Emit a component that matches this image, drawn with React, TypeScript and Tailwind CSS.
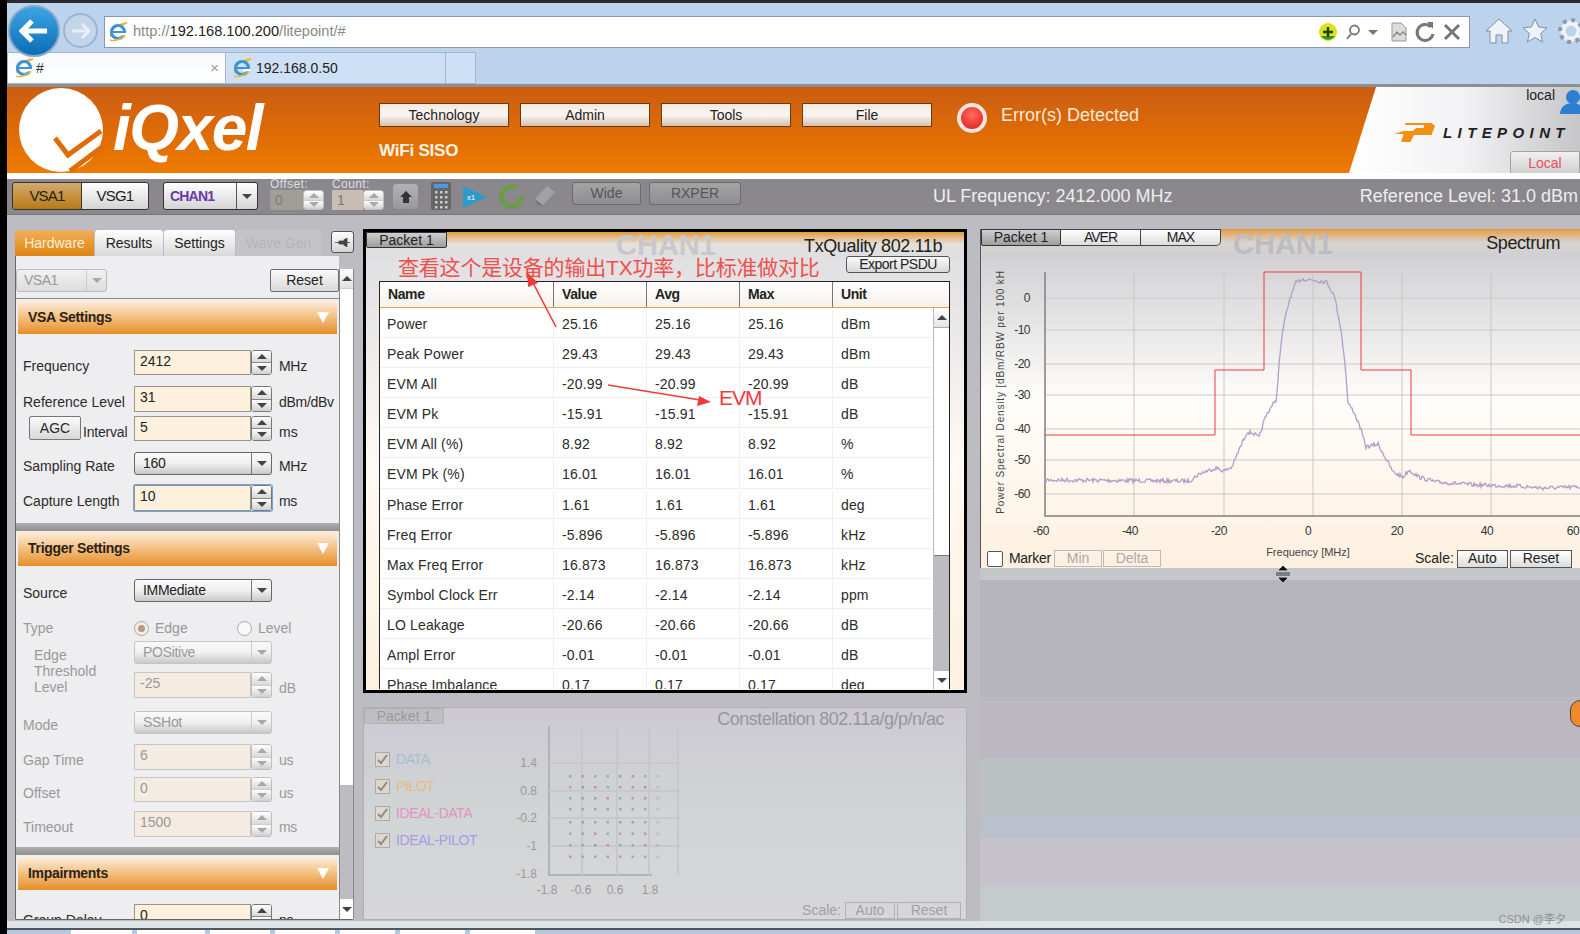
import clsx from 'clsx'
import type { ReactNode } from 'react'

type Row = { name: string; value: string; unit: string }

const rows: Row[] = [
  { name: 'Power', value: '25.16', unit: 'dBm' },
  { name: 'Peak Power', value: '29.43', unit: 'dBm' },
  { name: 'EVM All', value: '-20.99', unit: 'dB' },
  { name: 'EVM Pk', value: '-15.91', unit: 'dB' },
  { name: 'EVM All (%)', value: '8.92', unit: '%' },
  { name: 'EVM Pk (%)', value: '16.01', unit: '%' },
  { name: 'Phase Error', value: '1.61', unit: 'deg' },
  { name: 'Freq Error', value: '-5.896', unit: 'kHz' },
  { name: 'Max Freq Error', value: '16.873', unit: 'kHz' },
  { name: 'Symbol Clock Err', value: '-2.14', unit: 'ppm' },
  { name: 'LO Leakage', value: '-20.66', unit: 'dB' },
  { name: 'Ampl Error', value: '-0.01', unit: 'dB' },
  { name: 'Phase Imbalance', value: '0.17', unit: 'deg' },
]

// key points of the spectrum trace, in page pixels
const traceKeys: [number, number][] = [
  [1044, 480], [1188, 481], [1200, 473], [1215, 468], [1223, 471], [1231, 467], [1238, 450], [1246, 432],
  [1252, 433], [1258, 438], [1264, 418], [1272, 403], [1275, 403], [1279, 353], [1283, 323], [1289, 298],
  [1295, 283], [1301, 279], [1312, 280], [1326, 282], [1334, 298], [1340, 330], [1344, 363], [1347, 403],
  [1353, 412], [1359, 427], [1365, 447], [1377, 444], [1384, 457], [1392, 472], [1402, 477], [1408, 470],
  [1418, 477], [1435, 482], [1476, 485], [1515, 486], [1542, 488], [1580, 487],
]

function buildTrace() {
  let seed = 7
  const rnd = () => {
    seed = (seed * 16807) % 2147483647
    return seed / 2147483647 - 0.5
  }
  const points: string[] = []
  let k = 0
  for (let x = 1044; x <= 1580; x += 1) {
    while (k < traceKeys.length - 2 && traceKeys[k + 1][0] < x) k++
    const [x0, y0] = traceKeys[k]
    const [x1, y1] = traceKeys[k + 1]
    const y = y0 + ((y1 - y0) * (x - x0)) / (x1 - x0) + rnd() * 4
    points.push(`${x},${y.toFixed(1)}`)
  }
  return points.join(' ')
}

function buildDots() {
  const dots: [number, number, string][] = []
  const colors = ['#9a8fc0', '#c27fa8', '#8fa0b8', '#b08fb0']
  for (let r = 0; r < 8; r++) {
    for (let c = 0; c < 8; c++) {
      const x = 569 + c * 12.5
      const y = 774 + r * (r > 3 ? 11.5 : 11)
      dots.push([x, y, colors[(r * 3 + c) % 4]])
    }
  }
  return dots
}

function Tri({ down, dim }: { down?: boolean; dim?: boolean }) {
  return (
    <span
      className={clsx(
        'h-0 w-0 border-x-[5px] border-x-transparent',
        down ? 'border-t-[5px]' : 'border-b-[5px]',
        down && (dim ? 'border-t-[#a8a8a8]' : 'border-t-[#444]'),
        !down && (dim ? 'border-b-[#a8a8a8]' : 'border-b-[#444]'),
      )}
    />
  )
}

function Spin({ dim, className }: { dim?: boolean; className?: string }) {
  return (
    <div
      className={clsx(
        'flex w-[21px] flex-col overflow-hidden rounded-[3px] border',
        dim ? 'border-[#bdbdbd]' : 'border-[#777]',
        className,
      )}
    >
      <div className="flex flex-1 items-center justify-center bg-linear-to-b from-white to-[#d8d8d8]">
        <Tri dim={dim} />
      </div>
      <div className={clsx('flex flex-1 items-center justify-center border-t bg-linear-to-b from-white to-[#d0d0d0]', dim ? 'border-[#ccc]' : 'border-[#888]')}>
        <Tri down dim={dim} />
      </div>
    </div>
  )
}

function NumField({ value, dim, focus, h = 'h-[25px]' }: { value: string; dim?: boolean; focus?: boolean; h?: string }) {
  return (
    <div className={clsx('flex w-[138px]', h, focus && 'rounded-[2px] shadow-[0_0_0_1px_#6fa4dc]')}>
      <div
        className={clsx(
          'w-[117px] border pl-[5px] text-[14px] leading-[21px]',
          dim ? 'border-[#c8c5c2] bg-[#f4ebe3] text-[#999]' : 'border-[#99948c] bg-[#fdf0dc] text-[#222]',
        )}
      >
        {value}
      </div>
      <Spin dim={dim} />
    </div>
  )
}

function SelectField({ value, dim }: { value: string; dim?: boolean }) {
  return (
    <div
      className={clsx(
        'flex h-[23px] w-[138px] rounded-[3px] border bg-linear-to-b from-[#fafafa] via-[#f0f0f0] to-[#c8c8c8]',
        dim ? 'border-[#c4c4c4]' : 'border-[#666]',
      )}
    >
      <div className={clsx('w-[116px] pl-[8px] text-[14px] leading-[20px] tracking-[-0.3px]', dim ? 'text-[#999]' : 'text-[#222]')}>{value}</div>
      <div className={clsx('flex flex-1 items-center justify-center border-l', dim ? 'border-[#ccc]' : 'border-[#777]')}>
        <Tri down dim={dim} />
      </div>
    </div>
  )
}

function FormRow({ label, unit, dim, tight, className, children }: { label?: string; unit?: string; dim?: boolean; tight?: boolean; className?: string; children: ReactNode }) {
  return (
    <div className={clsx('flex items-start text-[14px]', dim ? 'text-[#999]' : 'text-[#2b2b2b]', className)}>
      <div className={clsx('w-[118px] shrink-0 pl-[7px] leading-[18px] whitespace-nowrap', tight ? 'pt-[5px]' : 'pt-[7px]')}>{label}</div>
      {children}
      {unit && <div className={clsx('ml-[7px] leading-[18px] whitespace-nowrap tracking-[-0.3px]', tight ? 'pt-[5px]' : 'pt-[7px]')}>{unit}</div>}
    </div>
  )
}

function SectionHead({ title, className }: { title: string; className?: string }) {
  return (
    <div
      className={clsx(
        'mx-[2px] flex items-center justify-between bg-linear-to-b from-[#fdf0e2] via-[#f3c080] to-[#e58e1c] pl-[10px] pr-[8px] text-[14px] font-bold tracking-[-0.3px] text-[#2a2118]',
        className,
      )}
    >
      <span>{title}</span>
      <span className="h-0 w-0 border-x-[6px] border-t-[11px] border-x-transparent border-t-white" />
    </div>
  )
}

function NavButton({ children }: { children: ReactNode }) {
  return (
    <div className="flex h-[24px] w-[130px] shrink-0 items-center justify-center border border-[#6a3a10] bg-linear-to-b from-[#f4e8e0] via-[#fbf6f2] to-[#d2c0b2] text-[14px] text-[#222]">
      {children}
    </div>
  )
}

function GreyButton({ children, className }: { children: ReactNode; className?: string }) {
  return (
    <div className={clsx('flex items-center justify-center rounded-[2px] border border-[#6f6f6f] bg-linear-to-b from-[#fafafa] to-[#d8d8d8] text-[14px] text-[#222]', className)}>
      {children}
    </div>
  )
}

function IeIcon() {
  return (
    <svg width="20" height="20" viewBox="0 0 20 20">
      <path d="M3 15C1 9 9 2 19 1c-3 1-5 2-6 3" fill="none" stroke="#efb52f" strokeWidth="1.6" />
      <circle cx="10" cy="10" r="6.6" fill="none" stroke="#3a95d8" strokeWidth="3" />
      <rect x="5" y="9" width="10" height="2" fill="#3a95d8" />
      <rect x="11" y="11" width="7" height="2.4" fill="white" />
      <path d="M2 18c4 2 11-1 15-5" fill="none" stroke="#efb52f" strokeWidth="1.4" />
    </svg>
  )
}

function BrowserBar() {
  return (
    <div className="relative h-[81px] bg-[#bcd3ee]">
      <div className="flex h-[49px] items-start">
        <div className="relative ml-[1px] mt-[2px] flex h-[52px] w-[52px] shrink-0 items-center justify-center rounded-full border-2 border-[#8aa7c7] bg-linear-to-b from-[#3aa6e4] to-[#0a6db5]">
          <svg width="30" height="26" viewBox="0 0 30 26">
            <path d="M13 3 3 13l10 10M4 13h24" fill="none" stroke="white" strokeWidth="5" />
          </svg>
        </div>
        <div className="ml-[3px] mt-[10px] flex h-[35px] w-[35px] shrink-0 items-center justify-center rounded-full border-2 border-[#9fb4cc] bg-[#c3d5ea]">
          <svg width="22" height="18" viewBox="0 0 22 18">
            <path d="M12 2l7 7-7 7M2 9h16" fill="none" stroke="#e8eef6" strokeWidth="3" />
          </svg>
        </div>
        <div className="ml-[6px] mt-[13px] flex h-[32px] w-[1366px] shrink-0 items-center border border-[#8a97a8] bg-white pl-[3px] pr-[4px]">
          <IeIcon />
          <span className="ml-[5px] text-[14.6px] text-[#888]">
            http://<span className="text-[#222]">192.168.100.200</span>/litepoint/#
          </span>
          <div className="ml-auto flex items-center gap-[7px]">
            <svg width="20" height="20" viewBox="0 0 20 20">
              <circle cx="10" cy="10" r="9" fill="#e6dc1e" />
              <path d="M3 14a8.500 8.500 0 0 0 14 0z" fill="#2d9a1e" />
              <path d="M10 5v10M5 10h10" stroke="#0c4a10" strokeWidth="2.4" />
            </svg>
            <svg width="16" height="18" viewBox="0 0 16 18">
              <circle cx="9.500" cy="7" r="4.500" fill="none" stroke="#777" strokeWidth="1.800" />
              <path d="M6 11l-4 5" stroke="#777" strokeWidth="2" />
            </svg>
            <span className="h-0 w-0 border-x-[5px] border-t-[5px] border-x-transparent border-t-[#777]" />
            <svg width="16" height="20" viewBox="0 0 16 20" className="ml-[6px]">
              <path d="M1 1h9l5 5v13H1z" fill="#ddd" stroke="#999" />
              <path d="M2 15l4-5 3 3 3-3 3 3" fill="none" stroke="#888" strokeWidth="1.400" />
            </svg>
            <svg width="22" height="22" viewBox="0 0 22 22">
              <path d="M17 6a8 8 0 1 0 2 7" fill="none" stroke="#777" strokeWidth="3" />
              <path d="M13 1l6 0 0 7z" fill="#777" />
            </svg>
            <svg width="18" height="18" viewBox="0 0 18 18" className="mr-[4px]">
              <path d="M2 2l14 14M16 2 2 16" stroke="#777" strokeWidth="3" />
            </svg>
          </div>
        </div>
        <div className="ml-[14px] mt-[13px] flex items-center gap-[7px]">
          <svg width="30" height="28" viewBox="0 0 30 28">
            <path d="M15 2 2 14h4v12h6v-8h6v8h6V14h4z" fill="#eef3f9" stroke="#7f8ea0" />
          </svg>
          <svg width="28" height="28" viewBox="0 0 28 28">
            <path d="M14 2l3.600 8 8.400.8-6.400 5.700 2 8.500-7.600-4.500L6.400 25l2-8.500L2 10.800l8.400-.8z" fill="#eef3f9" stroke="#7f8ea0" />
          </svg>
          <svg width="30" height="30" viewBox="0 0 30 30">
            <circle cx="15" cy="15" r="8" fill="none" stroke="#eef3f9" strokeWidth="5" />
            <circle cx="15" cy="15" r="11" fill="none" stroke="#8e9bab" strokeWidth="4" strokeDasharray="4 4.600" />
          </svg>
        </div>
      </div>
      <div className="flex h-[32px] items-stretch">
        <div className="flex w-[219px] items-center border border-[#a9b5c4] bg-linear-to-b from-[#f6f9fd] to-white pl-[6px] text-[14px] text-[#333]">
          <IeIcon />
          <span className="ml-[2px]">#</span>
          <span className="ml-auto mr-[6px] text-[15px] text-[#999]">×</span>
        </div>
        <div className="flex w-[220px] items-center border border-l-0 border-[#a9b5c4] bg-[#cde0f5] pl-[6px] text-[14px] text-[#222]">
          <IeIcon />
          <span className="ml-[4px]">192.168.0.50</span>
        </div>
        <div className="w-[30px] border border-l-0 border-[#a9b5c4] bg-[#cde0f5]" />
      </div>
    </div>
  )
}

function AppHeader() {
  return (
    <div className="relative flex h-[86px] items-start overflow-hidden bg-linear-to-b from-[#cb5d12] via-[#dd6a06] to-[#ee7b00]">
      <svg width="96" height="86" viewBox="0 0 96 86" className="ml-[11px] shrink-0">
        <circle cx="43" cy="43" r="42" fill="white" />
        <path d="M37 51 50 68 83 44" fill="none" stroke="#e06c08" strokeWidth="5" />
        <path d="M52 84 84 60" stroke="#e06c08" strokeWidth="5" />
      </svg>
      <div className="ml-[-1px] mt-[5px] w-[266px] shrink-0 text-[64px] leading-[72px] font-bold italic tracking-[-1.5px] text-white">iQxel</div>
      <div className="mt-[16px] shrink-0">
        <div className="flex gap-[11px]">
          <NavButton>Technology</NavButton>
          <NavButton>Admin</NavButton>
          <NavButton>Tools</NavButton>
          <NavButton>File</NavButton>
          <div className="ml-[14px] flex h-[30px] w-[30px] shrink-0 items-center justify-center rounded-full bg-[#f0e6e0]">
            <div className="h-[22px] w-[22px] rounded-full bg-[radial-gradient(circle_at_50%_35%,#ff6b5c,#e01818)]" />
          </div>
          <div className="ml-[3px] whitespace-nowrap text-[18px] leading-[24px] text-[#f9e9d8]">Error(s) Detected</div>
        </div>
        <div className="mt-[7px] text-[17px] leading-[22px] font-bold tracking-[-0.2px] text-[#fdf2e6]">WiFi SISO</div>
      </div>
      <div className="absolute inset-y-0 right-0 w-[231px] bg-linear-to-r from-white via-[#f2f2f4] to-[#c6c6c8] [clip-path:polygon(27px_0,100%_0,100%_100%,0_100%)]">
        <div className="absolute right-[25px] top-0 text-[14px] leading-[16px] text-[#222]">local</div>
        <svg width="20" height="26" viewBox="0 0 20 26" className="absolute right-0 top-[2px]">
          <circle cx="13" cy="8" r="7" fill="#2b7fd0" />
          <path d="M0 25c0-8 7-11 13-11s10 3 10 11z" fill="#2b7fd0" />
        </svg>
        <div className="absolute left-[44px] top-[34px] flex items-center">
          <svg width="42" height="24" viewBox="0 0 36 24" preserveAspectRatio="none">
            <path d="M11 2h22l3 3-3 9H18l-3 7H7l2-8H1l8-3h8l3-3h6l1-3H10z" fill="#ef9012" />
          </svg>
          <span className="ml-[8px] text-[15px] font-bold italic leading-[18px] tracking-[5.400px] text-[#222]">LITEPOINT</span>
        </div>
        <div className="absolute right-0 top-[64px] flex h-[24px] w-[70px] items-center justify-center rounded-l-[3px] border border-[#a2a2a2] bg-linear-to-b from-[#f0f0f0] to-[#cfcfcf] text-[14px] text-[#e8525e]">
          Local
        </div>
      </div>
    </div>
  )
}

function ToolBar() {
  return (
    <div className="flex h-[36px] items-start border-b border-[#777] bg-[#8a888c] text-[#dedee2]">
      <div className="ml-[5px] mt-[3px] flex h-[28px] w-[137px] overflow-hidden rounded-[3px] border border-[#333] text-[15px] tracking-[-0.8px] text-[#222]">
        <div className="flex w-[69px] items-center justify-center border-r border-[#333] bg-linear-to-b from-[#cfaa72] via-[#c9923c] to-[#b87918]">VSA1</div>
        <div className="flex flex-1 items-center justify-center bg-linear-to-b from-white to-[#d4d4d4]">VSG1</div>
      </div>
      <div className="ml-[14px] mt-[3px] flex h-[28px] w-[95px] overflow-hidden rounded-[3px] border border-[#333] bg-linear-to-b from-white to-[#d4d4d4] text-[14px] font-bold tracking-[-0.8px] text-[#6a3aa8]">
        <div className="flex w-[73px] items-center border-r border-[#555] pl-[6px]">CHAN1</div>
        <div className="flex flex-1 items-center justify-center">
          <Tri down />
        </div>
      </div>
      <div className="ml-[12px] w-[54px]">
        <div className="text-[12px] leading-[11px] tracking-[0.4px]">Offset:</div>
        <div className="flex h-[20px]">
          <div className="w-[33px] bg-[#a09e96] pl-[5px] text-[14px] leading-[20px] text-[#7f7d78]">0</div>
          <Spin dim className="border-[#777]" />
        </div>
      </div>
      <div className="ml-[8px] w-[52px]">
        <div className="text-[12px] leading-[11px] tracking-[0.4px]">Count:</div>
        <div className="flex h-[20px]">
          <div className="w-[31px] bg-[#c9bcb2] pl-[5px] text-[14px] leading-[20px] text-[#777]">1</div>
          <Spin dim className="border-[#555]" />
        </div>
      </div>
      <div className="ml-[9px] mt-[5px] flex h-[25px] w-[25px] items-center justify-center rounded-[4px] bg-linear-to-b from-[#b0b2b6] to-[#98999e]">
        <svg width="14" height="14" viewBox="0 0 14 14">
          <path d="M7 1 1 7h3v6h6V7h3z" fill="#333" />
        </svg>
      </div>
      <svg width="22" height="30" viewBox="0 0 22 30" className="ml-[12px] mt-[2px]">
        <rect x="1" y="1" width="20" height="28" rx="2" fill="#666" />
        <rect x="4" y="3" width="14" height="4" fill="#4a9ae0" />
        {[10, 15, 20, 25].map((y) => [5, 10, 15].map((x) => <rect key={`${x}-${y}`} x={x} y={y} width="2.500" height="2.500" fill="#ccc" />))}
      </svg>
      <svg width="26" height="24" viewBox="0 0 26 24" className="ml-[10px] mt-[6px]">
        <path d="M1 1 25 12 1 23z" fill="#2f9ac8" />
        <text x="5" y="15" fontSize="7" fontWeight="bold" fill="#cfe8f4">x1</text>
      </svg>
      <svg width="27" height="27" viewBox="0 0 27 27" className="ml-[10px] mt-[4px]">
        <circle cx="13.500" cy="13.500" r="10" fill="none" stroke="#6c9c48" strokeWidth="5" strokeDasharray="52 10" />
      </svg>
      <svg width="26" height="24" viewBox="0 0 26 24" className="ml-[7px] mt-[5px]">
        <path d="M3 15 15 2l8 6-12 13H5z" fill="#a2a2a4" />
        <path d="M3 15l8 6H5z" fill="#777" />
      </svg>
      <div className="ml-[14px] mt-[3px] flex h-[23px] w-[69px] items-center justify-center rounded-[3px] border border-[#6a6a6a] bg-linear-to-b from-[#a4a4a6] to-[#8e8e90] text-[14px] text-[#555]">Wide</div>
      <div className="ml-[8px] mt-[3px] flex h-[23px] w-[92px] items-center justify-center rounded-[3px] border border-[#6a6a6a] bg-linear-to-b from-[#a4a4a6] to-[#8e8e90] text-[14px] text-[#555]">RXPER</div>
      <div className="ml-[192px] mt-[5px] whitespace-nowrap text-[18px] leading-[24px] text-[#eeeef0]">UL Frequency: 2412.000 MHz</div>
      <div className="ml-auto mr-[2px] mt-[5px] whitespace-nowrap text-[18px] leading-[24px] text-[#eeeef0]">Reference Level: 31.0 dBm</div>
    </div>
  )
}

function SideTabs() {
  return (
    <div className="flex h-[26px] items-stretch gap-[1px] text-[14px]">
      <div className="flex w-[79px] items-center justify-center rounded-t-[3px] bg-linear-to-b from-[#eeb060] via-[#e99a30] to-[#dd8410] text-[#fbeedd]">Hardware</div>
      <div className="flex w-[68px] items-center justify-center rounded-t-[3px] bg-linear-to-b from-white to-[#d8d8d8] text-[#222]">Results</div>
      <div className="flex w-[71px] items-center justify-center rounded-t-[3px] bg-linear-to-b from-white to-[#d8d8d8] text-[#222]">Settings</div>
      <div className="flex w-[85px] items-center justify-center rounded-t-[3px] bg-[#c4c4c8] text-[#b4b4b8]">Wave Gen</div>
      <div className="ml-[9px] mt-[1px] flex h-[22px] w-[23px] items-center justify-center rounded-[3px] border border-[#555] bg-linear-to-b from-white to-[#d4d4d4]">
        <svg width="15" height="9" viewBox="0 0 15 9">
          <path d="M0 4.500h4M4 3h5V1.500h2V0h1v9h-1V7.500H9V6H4zM12 4.500h3" fill="#444" stroke="#444" strokeWidth="0.800" />
        </svg>
      </div>
    </div>
  )
}

function SidePanel() {
  return (
    <div className="ml-[8px] w-[339px] shrink-0 pt-[15px]">
      <SideTabs />
      <div className="flex h-[664px] overflow-hidden rounded-b-[2px] border-b border-l border-[#666]">
        <div className="w-[323px] overflow-hidden bg-[#eeedf0]">
          <div className="flex items-start justify-between pt-[13px] pb-[6px]">
            <div className="flex h-[23px] w-[91px] rounded-[3px] border border-[#bbb] bg-linear-to-b from-[#f2f2f2] to-[#dcdcdc] text-[14px] tracking-[-0.5px] text-[#999]">
              <div className="w-[69px] pl-[7px] leading-[20px]">VSA1</div>
              <div className="flex flex-1 items-center justify-center border-l border-[#ccc]">
                <Tri down dim />
              </div>
            </div>
            <GreyButton className="h-[23px] w-[69px]">Reset</GreyButton>
          </div>
          <div className="border-t border-[#888] pt-[1px]">
            <SectionHead title="VSA Settings" className="h-[34px]" />
          </div>
          <FormRow label="Frequency" unit="MHz" className="mt-[16px]">
            <NumField value="2412" />
          </FormRow>
          <FormRow label="Reference Level" unit="dBm/dBv" className="mt-[11px]">
            <NumField value="31" h="h-[26px]" />
          </FormRow>
          <div className="mt-[4px] flex items-start text-[14px] text-[#2b2b2b]">
            <div className="ml-[13px] flex h-[24px] w-[52px] items-center justify-center rounded-[2px] border border-[#777] bg-linear-to-b from-[#fafafa] to-[#d8d8d8]">AGC</div>
            <div className="w-[53px] pl-[2px] pt-[7px] leading-[18px] tracking-[-0.2px]">Interval</div>
            <NumField value="5" />
            <div className="ml-[7px] pt-[7px] leading-[18px]">ms</div>
          </div>
          <FormRow label="Sampling Rate" unit="MHz" tight className="mt-[11px]">
            <SelectField value="160" />
          </FormRow>
          <FormRow label="Capture Length" unit="ms" className="mt-[10px]">
            <NumField value="10" h="h-[26px]" focus />
          </FormRow>
          <div className="mt-[12px] h-[8px] bg-linear-to-b from-[#b0b0b2] to-[#8f8f92]" />
          <SectionHead title="Trigger Settings" className="h-[35px]" />
          <FormRow label="Source" tight className="mt-[13px]">
            <SelectField value="IMMediate" />
          </FormRow>
          <div className="mt-[17px] flex h-[18px] items-center text-[14px] text-[#999]">
            <div className="w-[118px] pl-[7px]">Type</div>
            <span className="flex h-[15px] w-[15px] items-center justify-center rounded-full border border-[#aaa] bg-[#f4ede6]">
              <span className="h-[7px] w-[7px] rounded-full bg-[#b49a80]" />
            </span>
            <span className="ml-[6px] w-[82px]">Edge</span>
            <span className="h-[15px] w-[15px] rounded-full border border-[#aaa] bg-[#f8f8f8]" />
            <span className="ml-[6px]">Level</span>
          </div>
          <div className="mt-[4px] flex items-start text-[14px] text-[#999]">
            <div className="w-[118px] pl-[18px] pt-[6px] leading-[16px]">
              Edge
              <br />
              Threshold
              <br />
              Level
            </div>
            <div>
              <SelectField value="POSitive" dim />
              <div className="mt-[8px] flex items-start">
                <NumField value="-25" dim h="h-[26px]" />
                <div className="ml-[7px] pt-[7px] leading-[18px]">dB</div>
              </div>
            </div>
          </div>
          <FormRow label="Mode" dim tight className="mt-[13px]">
            <SelectField value="SSHot" dim />
          </FormRow>
          <FormRow label="Gap Time" unit="us" dim className="mt-[10px]">
            <NumField value="6" dim h="h-[26px]" />
          </FormRow>
          <FormRow label="Offset" unit="us" dim className="mt-[7px]">
            <NumField value="0" dim />
          </FormRow>
          <FormRow label="Timeout" unit="ms" dim className="mt-[9px]">
            <NumField value="1500" dim h="h-[26px]" />
          </FormRow>
          <div className="mt-[10px] h-[8px] bg-linear-to-b from-[#b0b0b2] to-[#8f8f92]" />
          <SectionHead title="Impairments" className="mt-[1px] h-[34px]" />
          <FormRow label="Group Delay" unit="ns" className="mt-[14px]">
            <NumField value="0" />
          </FormRow>
        </div>
        <div className="mt-[13px] flex w-[15px] flex-col border-x border-[#888] bg-white">
          <div className="flex h-[20px] items-center justify-center border-b border-[#ccc] bg-linear-to-b from-white to-[#e0e0e0]">
            <Tri />
          </div>
          <div className="flex-1" />
          <div className="h-[114px] bg-[#bdbcc0]" />
          <div className="flex h-[20px] items-center justify-center bg-white">
            <Tri down />
          </div>
        </div>
      </div>
    </div>
  )
}

function ScrollBar() {
  return (
    <div className="flex w-[16px] flex-col border-l border-[#bbb] bg-white">
      <div className="flex h-[20px] items-center justify-center border-b border-[#aaa] bg-linear-to-b from-white to-[#e4e4e4]">
        <Tri />
      </div>
      <div className="flex-1" />
      <div className="h-[116px] border-t border-[#777] bg-[#bdbcc0]" />
      <div className="flex h-[19px] items-center justify-center">
        <Tri down />
      </div>
    </div>
  )
}

function QualityPanel() {
  return (
    <div className="relative h-[464px] border-[3px] border-black bg-linear-to-b from-[#dcdce0] via-[#fff9f3] to-[#fdf1e0]">
      <div className="relative flex h-[24px] items-start justify-between bg-linear-to-b from-[#e39a34] via-[#e5e0da] to-transparent pr-[22px]">
        <div className="flex h-[16px] w-[81px] items-center justify-center rounded-b-[2px] border border-[#333] bg-linear-to-b from-[#cfcfcf] to-[#9e9e9e] text-[14px] text-[#222]">Packet 1</div>
        <div className="absolute left-[250px] top-0 text-[29px] leading-[26px] font-bold text-[#c8c7ca]">CHAN1</div>
        <div className="relative mt-[3px] text-[18px] leading-[22px] tracking-[-0.4px] text-[#222]">TxQuality 802.11b</div>
      </div>
      <div className="flex justify-end pr-[14px]">
        <GreyButton className="h-[17px] w-[104px] rounded-[3px] border-[#555] tracking-[-0.5px]">Export PSDU</GreyButton>
      </div>
      <div className="ml-[13px] mt-[8px] h-[408px] w-[571px] overflow-hidden border-x border-t border-[#222] bg-white">
        <div className="grid h-[26px] grid-cols-[173px_93px_93px_93px_1fr] border-b border-[#e6a24a] bg-linear-to-b from-white to-[#f6f2ec] text-[14px] leading-[24px] font-bold tracking-[-0.4px] text-[#222]">
          {['Name', 'Value', 'Avg', 'Max', 'Unit'].map((h, i) => (
            <div key={h} className={clsx('pl-[8px]', i > 0 && 'border-l border-[#777]')}>
              {h}
            </div>
          ))}
        </div>
        <div className="flex h-[382px]">
          <div className="flex-1 overflow-hidden">
            {rows.map((r) => (
              <div key={r.name} className="grid h-[30.1px] grid-cols-[173px_93px_93px_93px_1fr] border-b border-[#efefef] pt-[2px] text-[14px] leading-[29px] tracking-[0.15px] text-[#2b2b2b]">
                <div className="pl-[7px]">{r.name}</div>
                <div className="border-l border-[#efefef] pl-[8px]">{r.value}</div>
                <div className="border-l border-[#efefef] pl-[8px]">{r.value}</div>
                <div className="border-l border-[#efefef] pl-[8px]">{r.value}</div>
                <div className="border-l border-[#efefef] pl-[8px]">{r.unit}</div>
              </div>
            ))}
          </div>
          <ScrollBar />
        </div>
      </div>

      {/* red notes pasted on top of the screenshot */}
      <div className="absolute left-[32px] top-[23px] whitespace-nowrap text-[21px] leading-[26px] tracking-[-0.2px] text-[#f0504c]">查看这个是设备的输出TX功率，比标准做对比</div>
      <div className="absolute left-[353px] top-[153px] text-[21px] leading-[26px] tracking-[-1px] text-[#ee3b3b]">EVM</div>
      <svg className="absolute left-[150px] top-[30px]" width="210" height="150" viewBox="516 262 210 150">
        <path d="M556 327 531 279" stroke="#ee3b3b" strokeWidth="1.600" fill="none" />
        <path d="M527 272 538 283 528 287z" fill="#ee3b3b" />
        <path d="M608 385 700 400" stroke="#ee3b3b" strokeWidth="1.600" fill="none" />
        <path d="M711 402 697 406 699 396z" fill="#ee3b3b" />
      </svg>
    </div>
  )
}

function ConstellationPanel() {
  const legend: [string, string][] = [
    ['DATA', 'text-[#a9bdd0]'],
    ['PILOT', 'text-[#ecb87c]'],
    ['IDEAL-DATA', 'text-[#e890c4]'],
    ['IDEAL-PILOT', 'text-[#a89ae8]'],
  ]
  return (
    <div className="relative mt-[14px] flex h-[213px] flex-col rounded-[2px] border border-[#b0b0b4] bg-linear-to-b from-[#cdc9d3] via-[#d0d5d5] to-[#d7d6d9]">
      <div className="flex h-[16px] justify-between pr-[22px]">
        <div className="flex w-[80px] items-center justify-center border border-[#b2b2b4] bg-[#bfbfc2] text-[14px] text-[#9a9a9e]">Packet 1</div>
        <div className="text-[18px] leading-[22px] tracking-[-0.5px] text-[#96969c]">Constellation 802.11a/g/p/n/ac</div>
      </div>
      <div className="flex flex-1">
        <div className="ml-[11px] mt-[26px] flex w-[135px] flex-col gap-[8px]">
          {legend.map(([name, color]) => (
            <div key={name} className={clsx('flex h-[19px] items-center text-[14px] tracking-[-0.4px]', color)}>
              <span className="flex h-[15px] w-[15px] items-center justify-center border border-[#aaa] bg-[#dfd6cc]">
                <svg width="11" height="11" viewBox="0 0 11 11">
                  <path d="M1 6l3 3 6-8" fill="none" stroke="#8a8a8a" strokeWidth="2" />
                </svg>
              </span>
              <span className="ml-[6px]">{name}</span>
            </div>
          ))}
        </div>
        <svg width="170" height="175" viewBox="510 723 170 175" className="shrink-0">
          <path d="M549 725V874H652" fill="none" stroke="#a8a8ac" strokeWidth="1.500" />
          {[582, 617, 649, 678].map((x) => (
            <path key={x} d={`M${x} 725V874`} stroke="#c8c8cc" strokeWidth="2" />
          ))}
          {[762, 790, 817, 845].map((y) => (
            <path key={y} d={`M549 ${y}H680`} stroke="#c8c8cc" strokeWidth="2" />
          ))}
          {buildDots().map(([x, y, c], i) => (
            <rect key={i} x={x} y={y} width="2.500" height="2.500" fill={c} opacity={x > 650 ? 0.4 : 0.8} />
          ))}
          {[['1.4', 762], ['0.8', 790], ['-0.2', 817], ['-1', 845], ['-1.8', 873]].map(([t, y]) => (
            <text key={t} x="537" y={Number(y) + 4} fontSize="12" textAnchor="end" fill="#999">{t}</text>
          ))}
          {[['-1.8', 547], ['-0.6', 581], ['0.6', 615], ['1.8', 650]].map(([t, x]) => (
            <text key={t} x={Number(x)} y="893" fontSize="12" textAnchor="middle" fill="#999">{t}</text>
          ))}
        </svg>
      </div>
      <div className="flex h-[18px] items-center justify-end pr-[5px] text-[14px] text-[#a0a0a4]">
        <span className="mr-[4px]">Scale:</span>
        <span className="flex h-[17px] w-[50px] items-center justify-center border border-[#b2b2b6]">Auto</span>
        <span className="ml-[2px] flex h-[17px] w-[64px] items-center justify-center border border-[#b2b2b6]">Reset</span>
      </div>
    </div>
  )
}

function SpectrumChart() {
  const vx = [1133, 1223, 1312, 1401, 1490]
  const hy = [298, 330, 364, 395, 429, 460, 494]
  const yLabels = ['0', '-10', '-20', '-30', '-40', '-50', '-60']
  const xLabels: [string, number][] = [['-60', 1040], ['-40', 1129], ['-20', 1218], ['0', 1307], ['20', 1396], ['40', 1486], ['60', 1572]]
  return (
    <svg width="600" height="288" viewBox="980 262 600 288" className="block shrink-0">
      <text transform="translate(1003 392) rotate(-90)" fontSize="10" textAnchor="middle" fill="#444" letterSpacing="0.85">
        Power Spectral Density [dBm/RBW per 100 kH
      </text>
      {hy.map((y, i) => (
        <g key={y}>
          <path d={`M1044 ${y}H1580`} stroke="#c9c8c6" />
          <text x="1029" y={y + 4} fontSize="12" textAnchor="end" fill="#333" letterSpacing="-0.5">{yLabels[i]}</text>
        </g>
      ))}
      {vx.map((x) => (
        <path key={x} d={`M${x} 272V516`} stroke="#c9c8c6" />
      ))}
      <path d="M1044 272V516H1580" fill="none" stroke="#808080" strokeWidth="1.500" />
      <polyline points={buildTrace()} fill="none" stroke="#b39dc8" strokeWidth="1.300" />
      <path d="M1044 435H1214V370H1263V272H1360V370H1410V435H1580" fill="none" stroke="#f0393b" strokeWidth="1" />
      {xLabels.map(([t, x]) => (
        <text key={t} x={x} y="535" fontSize="12" textAnchor="middle" fill="#333" letterSpacing="-0.5">{t}</text>
      ))}
    </svg>
  )
}

function SpectrumPanel() {
  return (
    <div className="relative flex h-[339px] flex-col overflow-hidden border-l border-[#555] bg-linear-to-b from-[#c8c8cc] via-[#fffdfb] to-[#fdf0df]">
      <div className="flex h-[27px] items-start bg-linear-to-b from-[#e39a34] via-[#d8d4d0] to-transparent">
        <div className="flex h-[17px] w-[80px] items-center justify-center rounded-b-[2px] border border-[#333] bg-linear-to-b from-[#cfcfcf] to-[#9e9e9e] text-[14px] text-[#222]">Packet 1</div>
        <div className="flex h-[17px] w-[80px] items-center justify-center border border-l-0 border-[#444] bg-linear-to-b from-white to-[#dcdcdc] text-[14px] tracking-[-1px] text-[#222]">AVER</div>
        <div className="flex h-[17px] w-[80px] items-center justify-center rounded-br-[5px] border border-l-0 border-[#444] bg-linear-to-b from-white to-[#dcdcdc] text-[14px] tracking-[-1px] text-[#222]">MAX</div>
        <div className="ml-[12px] mt-[2px] text-[29px] leading-[26px] font-bold text-[#bdbcc0]">CHAN1</div>
        <div className="ml-auto mr-[20px] mt-[3px] text-[18px] leading-[22px] tracking-[-0.4px] text-[#222]">Spectrum</div>
      </div>
      <div className="mt-[6px]">
        <SpectrumChart />
      </div>
      <div className="relative mt-[-1px] flex h-[19px] items-center text-[14px] text-[#222]">
        <span className="ml-[6px] h-[16px] w-[16px] rounded-[2px] border border-[#555] bg-white" />
        <span className="ml-[6px] w-[39px] tracking-[-0.3px]">Marker</span>
        <span className="ml-[6px] flex h-[17px] w-[48px] items-center justify-center border border-[#bbb] text-[#aaa]">Min</span>
        <span className="ml-[1px] flex h-[17px] w-[58px] items-center justify-center border border-[#bbb] text-[#aaa]">Delta</span>
        <span className="ml-[94px] mt-[-12px] w-[106px] text-center text-[11px] whitespace-nowrap text-[#444]">Frequency [MHz]</span>
        <span className="ml-[54px] whitespace-nowrap">Scale:</span>
        <span className="ml-[3px] flex h-[18px] w-[51px] items-center justify-center border border-[#555] bg-linear-to-b from-white to-[#ddd]">Auto</span>
        <span className="ml-[2px] flex h-[18px] w-[62px] items-center justify-center border border-[#555] bg-linear-to-b from-white to-[#ddd]">Reset</span>
      </div>
    </div>
  )
}

export default function App() {
  return (
    <div className="flex h-[934px] w-[1580px] overflow-hidden bg-black font-['Liberation_Sans','Noto_Sans_CJK_SC',sans-serif]">
      <div className="w-[7px] shrink-0" />
      <div className="flex min-w-0 flex-1 flex-col">
        <div className="h-[3px] shrink-0 bg-[#2b2b30]" />
        <BrowserBar />
        <div className="h-[3px] shrink-0 bg-[#8f8f93]" />
        <AppHeader />
        <div className="h-[6px] shrink-0 bg-white" />
        <ToolBar />
        <div className="flex h-[706px] shrink-0 bg-[#bdbcc3]">
          <SidePanel />
          <div className="ml-[9px] w-[604px] shrink-0 pt-[14px]">
            <QualityPanel />
            <ConstellationPanel />
          </div>
          <div className="relative ml-[13px] w-[600px] shrink-0 pt-[14px]">
            <SpectrumPanel />
            <div className="h-[12px] bg-[#c4c7c9]" />
            <div className="h-[117px] bg-[#b6b4bc]" />
            <div className="h-[61px] bg-[#bbb8c2]" />
            <div className="h-[57px] bg-[#bbc0c3]" />
            <div className="h-[23px] bg-[#bac0cc]" />
            <div className="h-[48px] bg-[#c6c3cd]" />
            <div className="relative h-[35px] bg-[#c5cbcc]">
              <span className="absolute right-[14px] top-[26px] text-[11px] leading-[14px] whitespace-nowrap text-[#8e9294]">CSDN @李夕</span>
            </div>
            {/* resize cursor and the flash of an orange widget at the page edge */}
            <svg width="14" height="16" viewBox="0 0 14 16" className="absolute left-[296px] top-[351px]">
              <path d="M7 0 3 4h8zM7 16l-4-4h8zM0 7h14M0 9h14" fill="#111" stroke="#111" strokeWidth="0.800" />
            </svg>
            <div className="absolute right-[-10px] top-[485px] h-[27px] w-[20px] rounded-[10px] border border-[#444] bg-[#ee8a2a]" />
          </div>
        </div>
        <div className="h-[7px] shrink-0 bg-[#dde3e7]" />
        <div className="h-[2px] shrink-0 bg-[#55565a]" />
        <div className="flex h-[4px] shrink-0 gap-[5px] bg-[#b4c8e4] pl-[64px]">
          {[61, 68, 60, 60, 55, 65, 65].map((w, i) => (
            <div key={i} className="bg-white" style={{ width: w }} />
          ))}
        </div>
      </div>
    </div>
  )
}
